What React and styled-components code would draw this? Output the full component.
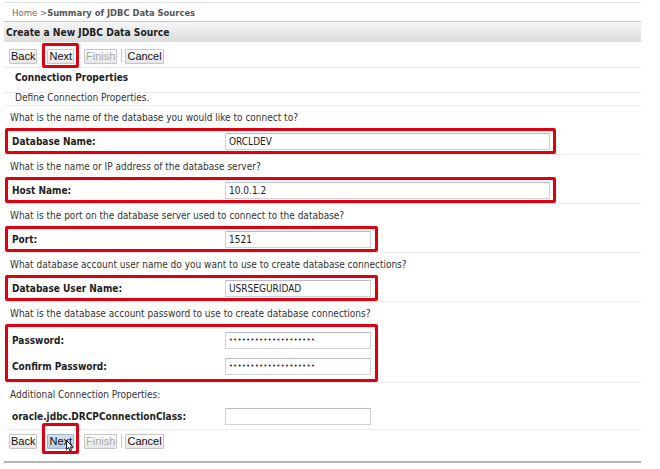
import React from 'react'
import styled, { createGlobalStyle } from 'styled-components'

const GlobalStyle = createGlobalStyle`
  body {
    margin: 0;
    background: #fff;
    font-family: "DejaVu Sans Condensed", "DejaVu Sans", sans-serif;
    font-size: 10px;
    color: #333;
  }
`

const Page = styled.div`
  width: 637px;
  margin: 2px 0 0 4px;
  border-top: 1px solid #dde2ea;
  border-bottom: 2px solid #b4b4b4;
  padding-bottom: 6px;
`

const Breadcrumb = styled.div`
  height: 18px;
  display: flex;
  align-items: center;
  padding-left: 8px;
  color: #6a6a6a;
  font-size: 9.5px;
  b {
    color: #555;
    font-size: 9.3px;
  }
`

const HeaderBar = styled.div`
  height: 20px;
  display: flex;
  align-items: center;
  padding-left: 2px;
  border-top: 1px solid #c9c9c9;
  background: linear-gradient(#f6f6f6, #dcdcdc);
  font-weight: bold;
  font-size: 10.2px;
  color: #222;
`

const ButtonBar = styled.div`
  height: 26px;
  display: flex;
  align-items: flex-start;
  padding: ${p => (p.$bottom ? '4px 0 0 5px' : '7px 0 0 5px')};
  box-sizing: border-box;
  border-top: ${p => (p.$bottom ? '1px solid #ececec' : 'none')};
  border-bottom: ${p => (p.$bottom ? 'none' : '1px solid #ececec')};
`

const Button = styled.button`
  position: relative;
  height: 15px;
  padding: 0 1px;
  margin: 0;
  border: 1px solid ${p => (p.$active ? '#9fb2cf' : '#c6c6c6')};
  border-radius: 1px;
  background: ${p =>
    p.$active ? 'linear-gradient(#d6e1ef, #bccde4)' : 'linear-gradient(#fdfdfd, #e6e6e6)'};
  font-family: "Liberation Sans", Arial, sans-serif;
  font-size: 11px;
  line-height: 13px;
  color: ${p => (p.disabled ? '#a9a9a9' : '#111')};
`

const Gap = styled.span`
  width: ${p => p.$w}px;
  flex: none;
`

const Divider = styled.span`
  width: 1px;
  height: 14px;
  margin: 0 3px 0 4px;
  background: #c8c8c8;
`

const Highlight = styled.div`
  flex: none;
  display: flex;
  flex-direction: ${p => (p.$stack ? 'column' : 'row')};
  align-items: ${p => (p.$stack ? 'stretch' : 'center')};
  width: ${p => (p.$w ? `${p.$w}px` : 'auto')};
  box-sizing: border-box;
  border: 3px solid #e1000f;
  border-radius: 2px;
  padding: ${p => p.$pad || '0'};
  margin: ${p => p.$margin || '0'};
`

const SectionTitle = styled.div`
  height: 25px;
  box-sizing: border-box;
  padding: 4px 0 0 11px;
  font-weight: bold;
  color: #222;
  border-bottom: 1px solid #ececec;
`

const SubTitle = styled.div`
  height: 12px;
  line-height: 9px;
  padding-left: 11px;
  color: #333;
  border-bottom: 1px solid #ececec;
`

const Question = styled.div`
  height: 22px;
  display: flex;
  align-items: center;
  padding-left: 6px;
  color: #333;
`

const FieldRow = styled.div`
  display: flex;
  align-items: center;
  box-sizing: border-box;
  height: ${p => (p.$plain ? '24px' : 'auto')};
  padding: ${p => (p.$plain ? '0 0 2px 8px' : '0 0 0 1px')};
  border-bottom: ${p => (p.$plain ? 'none' : '1px solid #ececec')};
`

const Field = styled.div`
  height: ${p => p.$h || 20}px;
  display: flex;
  align-items: center;
`

const Label = styled.span`
  width: ${p => p.$w || 217}px;
  flex: none;
  box-sizing: border-box;
  padding-left: ${p => (p.$w ? 0 : 4)}px;
  font-weight: bold;
  color: #1e1e1e;
`

const Input = styled.input`
  width: ${p => p.$w}px;
  height: 17px;
  box-sizing: border-box;
  margin: 0;
  padding: 0 0 0 3px;
  border: 1px solid #cfd2d6;
  border-top-color: #b8bcc2;
  background: #fff;
  font-family: "DejaVu Sans Condensed", "DejaVu Sans", sans-serif;
  font-size: ${p => (p.type === 'password' ? '7px' : '10px')};
  letter-spacing: ${p => (p.type === 'password' ? '0.6px' : '0')};
  color: #222;
  outline: none;
`

const Cursor = styled.svg`
  position: absolute;
  left: 18px;
  top: 5px;
`

function Buttons({ bottom }) {
  return (
    <ButtonBar $bottom={bottom}>
      <Button>Back</Button>
      <Gap $w={5} />
      <Highlight
        $pad={bottom ? '8px 2px 2px 2px' : '3px 2px 1px 2px'}
        $margin={bottom ? '-11px 0 0 0' : '-6px 0 0 0'}
      >
        <Button $active={bottom}>
          Next
          {bottom && (
            <Cursor width="8" height="12" viewBox="0 0 8 12">
              <path d="M0.5 0.5 L0.5 9.5 L2.6 7.6 L4.1 11 L5.5 10.4 L4.1 7.1 L7 7.1 Z" fill="#fff" stroke="#000" strokeWidth="0.9" />
            </Cursor>
          )}
        </Button>
      </Highlight>
      <Gap $w={5} />
      <Button disabled>Finish</Button>
      <Divider />
      <Button>Cancel</Button>
    </ButtonBar>
  )
}

const pw = 'xxxxxxxxxxxxxxxxxxxx'

function App() {
  return (
    <>
      <GlobalStyle />
      <Page>
        <Breadcrumb>
          Home &gt;<b>Summary of JDBC Data Sources</b>
        </Breadcrumb>
        <HeaderBar>Create a New JDBC Data Source</HeaderBar>
        <Buttons />
        <SectionTitle>Connection Properties</SectionTitle>
        <SubTitle>Define Connection Properties.</SubTitle>

        <Question>What is the name of the database you would like to connect to?</Question>
        <FieldRow>
          <Highlight $w={551}>
            <Field>
              <Label>Database Name:</Label>
              <Input $w={325} readOnly value="ORCLDEV" />
            </Field>
          </Highlight>
        </FieldRow>

        <Question>What is the name or IP address of the database server?</Question>
        <FieldRow>
          <Highlight $w={551}>
            <Field>
              <Label>Host Name:</Label>
              <Input $w={325} readOnly value="10.0.1.2" />
            </Field>
          </Highlight>
        </FieldRow>

        <Question>What is the port on the database server used to connect to the database?</Question>
        <FieldRow>
          <Highlight $w={373}>
            <Field>
              <Label>Port:</Label>
              <Input $w={146} readOnly value="1521" />
            </Field>
          </Highlight>
        </FieldRow>

        <Question>What database account user name do you want to use to create database connections?</Question>
        <FieldRow>
          <Highlight $w={373}>
            <Field>
              <Label>Database User Name:</Label>
              <Input $w={146} readOnly value="USRSEGURIDAD" />
            </Field>
          </Highlight>
        </FieldRow>

        <Question>What is the database account password to use to create database connections?</Question>
        <FieldRow>
          <Highlight $w={373} $stack>
            <Field $h={26}>
              <Label>Password:</Label>
              <Input $w={146} type="password" readOnly value={pw} />
            </Field>
            <Field $h={26}>
              <Label>Confirm Password:</Label>
              <Input $w={146} type="password" readOnly value={pw} />
            </Field>
          </Highlight>
        </FieldRow>

        <Question>Additional Connection Properties:</Question>
        <FieldRow $plain>
          <Label $w={213}>oracle.jdbc.DRCPConnectionClass:</Label>
          <Input $w={146} readOnly value="" />
        </FieldRow>

        <Buttons bottom />
      </Page>
    </>
  )
}

export default App
